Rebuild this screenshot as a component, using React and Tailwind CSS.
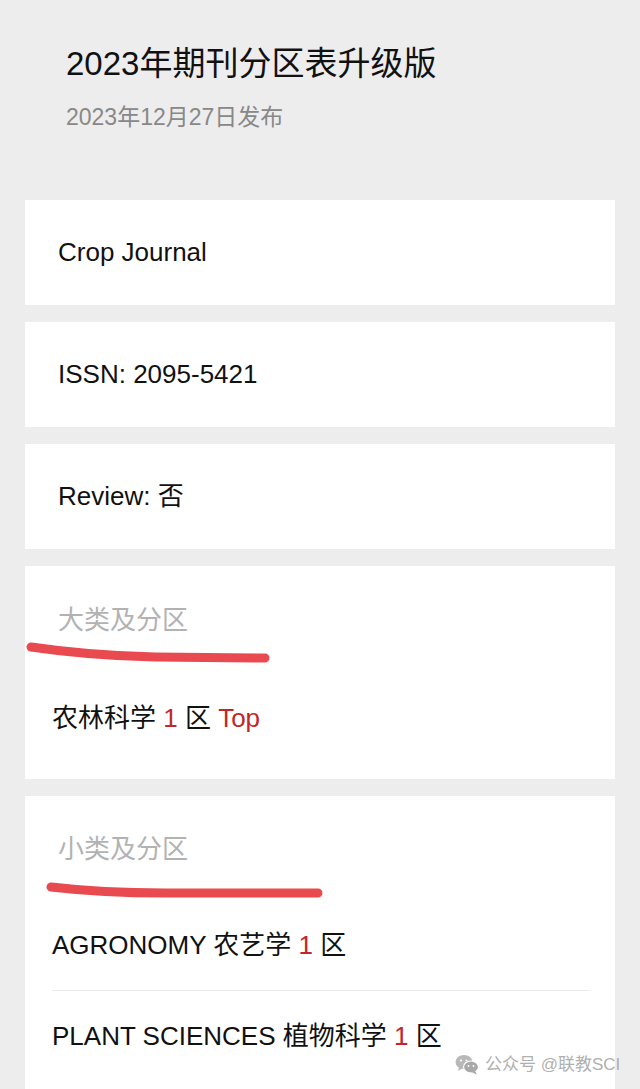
import React from "react";

const font = { fontFamily: '"Liberation Sans", "Noto Sans CJK SC", sans-serif' };

function InfoCard({ children }) {
  return (
    <div className="flex h-[105px] items-center bg-white pl-[33px] text-[26px] text-[#111]">
      {children}
    </div>
  );
}

function Scribble({ d }) {
  return (
    <svg
      className="pointer-events-none absolute left-0 top-0"
      width="590"
      height="140"
      viewBox="0 0 590 140"
    >
      <path d={d} fill="none" stroke="#e84a4f" strokeWidth="9" strokeLinecap="round" />
    </svg>
  );
}

function Red({ children }) {
  return <span className="text-[#c2262b]">{children}</span>;
}

function WeChatMark() {
  return (
    <svg width="24" height="21" viewBox="0 0 24 21">
      <ellipse cx="9" cy="8" rx="8.5" ry="7" fill="#b8b8b8" />
      <path d="M4 13 L3 17 L8 14 Z" fill="#b8b8b8" />
      <ellipse cx="16" cy="13" rx="7.5" ry="6" fill="#a9a9a9" stroke="#fff" strokeWidth="1.2" />
      <path d="M20 17 L22 20.5 L17 18.5 Z" fill="#a9a9a9" />
      <circle cx="6" cy="6.5" r="1.1" fill="#fff" />
      <circle cx="11.5" cy="6.5" r="1.1" fill="#fff" />
      <circle cx="13.5" cy="12" r="0.9" fill="#fff" />
      <circle cx="18.5" cy="12" r="0.9" fill="#fff" />
    </svg>
  );
}

export default function App() {
  return (
    <div
      className="relative h-[1089px] overflow-hidden bg-[#ededed] px-[25px] pt-[40px]"
      style={font}
    >
      {/* article header */}
      <div className="px-[41px]">
        <h1 className="text-[33px] font-normal leading-[48px] text-[#111]">
          2023年期刊分区表升级版
        </h1>
        <p className="mt-[13px] text-[23px] leading-[32px] text-[#888]">
          2023年12月27日发布
        </p>
      </div>

      <div className="mt-[67px] flex flex-col gap-[17px]">
        <InfoCard>Crop Journal</InfoCard>
        <InfoCard>ISSN: 2095-5421</InfoCard>
        <InfoCard>Review: 否</InfoCard>

        {/* 大类 */}
        <div className="relative bg-white pb-[16px] pt-[36px]">
          <div className="pl-[33px] text-[26px] leading-[36px] text-[#b2b2b2]">大类及分区</div>
          <Scribble d="M6 81 C 40 86, 80 90, 130 91 L 240 92" />
          <div className="mt-[35px] flex h-[90px] items-center pl-[27px] text-[26px] text-[#111]">
            <span>
              农林科学 <Red>1</Red> 区 <Red>Top</Red>
            </span>
          </div>
        </div>

        {/* 小类 */}
        <div className="relative bg-white pb-[20px] pt-[35px]">
          <div className="pl-[33px] text-[26px] leading-[36px] text-[#b2b2b2]">小类及分区</div>
          <Scribble d="M26 91 C 60 95, 90 97, 140 97 L 293 97" />
          <div className="ml-[27px] mr-[25px] mt-[34px] flex h-[90px] items-center border-b border-[#ececec] text-[26px] text-[#111]">
            <span>
              AGRONOMY 农艺学 <Red>1</Red> 区
            </span>
          </div>
          <div className="ml-[27px] mr-[25px] flex h-[90px] items-center text-[26px] text-[#111]">
            <span>
              PLANT SCIENCES 植物科学 <Red>1</Red> 区
            </span>
          </div>
        </div>
      </div>

      {/* watermark */}
      <div className="absolute left-[455px] top-[1052px] flex items-center gap-[6px] text-[17px] text-[#b0b0b0]">
        <WeChatMark />
        <span>公众号 @联教SCI</span>
      </div>
    </div>
  );
}
